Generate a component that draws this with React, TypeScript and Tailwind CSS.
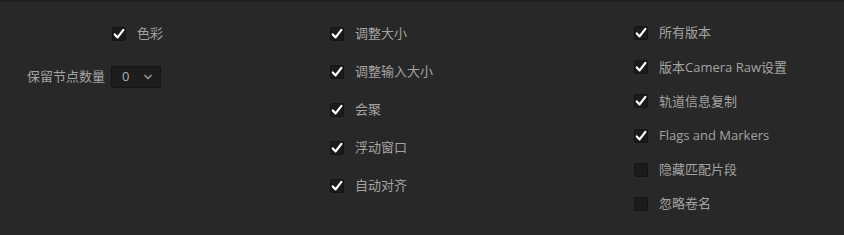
import React from 'react';

const font = { fontFamily: '"Open Sans", "Noto Sans CJK SC", sans-serif' };

function Box({ checked }: { checked: boolean }) {
  return (
    <div className="w-[14px] h-[14px] shrink-0 rounded-[2px] border border-[#141414] bg-[#1b1b1b] flex items-center justify-center">
      {checked && (
        <svg width="12" height="12" viewBox="0 0 12 12">
          <path d="M1.8 6.4 L4.6 9.4 L10.4 1.8" fill="none" stroke="#ffffff" strokeWidth="2.2" strokeLinecap="round" strokeLinejoin="round" />
        </svg>
      )}
    </div>
  );
}

function Row({ label, checked, h }: { label: string; checked: boolean; h: string }) {
  return (
    <div className={`flex items-center gap-[11px] ${h}`}>
      <Box checked={checked} />
      <span className="text-[13px] text-[#a3a3a3] whitespace-nowrap">{label}</span>
    </div>
  );
}

export default function App() {
  const mid = ['调整大小', '调整输入大小', '会聚', '浮动窗口', '自动对齐'];
  const right: [string, boolean][] = [
    ['所有版本', true],
    ['版本Camera Raw设置', true],
    ['轨道信息复制', true],
    ['Flags and Markers', true],
    ['隐藏匹配片段', false],
    ['忽略卷名', false],
  ];

  return (
    <div style={font} className="w-[844px] h-[235px] overflow-hidden bg-[#282828] border-t-2 border-[#1f1f1f] flex">
      <div className="w-[330px] shrink-0 pt-[13px] grid grid-cols-[105px_auto] gap-x-[6px] content-start">
        <div className="h-[38px]" />
        <div className="h-[38px] flex items-center pl-[1px]">
          <Row label="色彩" checked={true} h="h-[38px]" />
        </div>
        <div className="h-[48px] flex items-center justify-end text-[13px] text-[#a3a3a3] whitespace-nowrap">
          保留节点数量
        </div>
        <div className="h-[48px] flex items-center">
          <div className="w-[50px] h-[22px] rounded-[2px] border border-[#151515] bg-[#1d1d1d] flex items-center pl-[10px] gap-[14px]">
            <span className="text-[13px] text-[#b0b0b0]">0</span>
            <svg width="10" height="8" viewBox="0 0 10 8">
              <path d="M1.5 2 L5 5.5 L8.5 2" fill="none" stroke="#a0a0a0" strokeWidth="1.4" />
            </svg>
          </div>
        </div>
      </div>

      <div className="w-[304px] shrink-0 pt-[13px] flex flex-col">
        {mid.map((m) => (
          <Row key={m} label={m} checked={true} h="h-[38px]" />
        ))}
      </div>

      <div className="flex-1 pt-[14px] flex flex-col">
        {right.map(([l, c]) => (
          <Row key={l} label={l} checked={c} h="h-[34.2px]" />
        ))}
      </div>
    </div>
  );
}
